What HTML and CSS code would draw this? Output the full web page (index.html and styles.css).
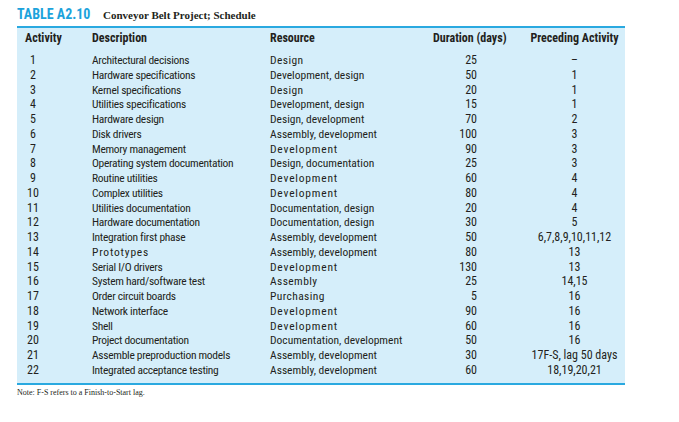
FILE: index.html
```html
<!DOCTYPE html>
<html>
<head>
<meta charset="utf-8">
<link rel="stylesheet" href="styles.css">
</head>
<body>
<div class="page">
  <div class="caption"><span class="label">TABLE A2.10</span><span class="title">Conveyor Belt Project; Schedule</span></div>
  <div class="box">
    <table class="sched">
      <colgroup><col class="c1"><col class="c2"><col class="c3"><col class="c4"><col class="c5"></colgroup>
      <thead>
        <tr><th class="act">Activity</th><th class="desc">Description</th><th class="res">Resource</th><th class="dur">Duration (days)</th><th class="pre">Preceding Activity</th></tr>
      </thead>
      <tbody>
        <tr><td class="act">1</td><td class="desc">Architectural decisions</td><td class="res sp1">Design</td><td class="dur">25</td><td class="pre">–</td></tr>
        <tr><td class="act">2</td><td class="desc">Hardware specifications</td><td class="res">Development, design</td><td class="dur">50</td><td class="pre">1</td></tr>
        <tr><td class="act">3</td><td class="desc">Kernel specifications</td><td class="res sp1">Design</td><td class="dur">20</td><td class="pre">1</td></tr>
        <tr><td class="act">4</td><td class="desc">Utilities specifications</td><td class="res">Development, design</td><td class="dur">15</td><td class="pre">1</td></tr>
        <tr><td class="act">5</td><td class="desc">Hardware design</td><td class="res">Design, development</td><td class="dur">70</td><td class="pre">2</td></tr>
        <tr><td class="act">6</td><td class="desc">Disk drivers</td><td class="res">Assembly, development</td><td class="dur">100</td><td class="pre">3</td></tr>
        <tr><td class="act">7</td><td class="desc">Memory management</td><td class="res sp2">Development</td><td class="dur">90</td><td class="pre">3</td></tr>
        <tr><td class="act">8</td><td class="desc">Operating system documentation</td><td class="res">Design, documentation</td><td class="dur">25</td><td class="pre">3</td></tr>
        <tr><td class="act">9</td><td class="desc">Routine utilities</td><td class="res sp2">Development</td><td class="dur">60</td><td class="pre">4</td></tr>
        <tr><td class="act">10</td><td class="desc">Complex utilities</td><td class="res sp2">Development</td><td class="dur">80</td><td class="pre">4</td></tr>
        <tr><td class="act">11</td><td class="desc">Utilities documentation</td><td class="res">Documentation, design</td><td class="dur">20</td><td class="pre">4</td></tr>
        <tr><td class="act">12</td><td class="desc">Hardware documentation</td><td class="res">Documentation, design</td><td class="dur">30</td><td class="pre">5</td></tr>
        <tr><td class="act">13</td><td class="desc">Integration first phase</td><td class="res">Assembly, development</td><td class="dur">50</td><td class="pre">6,7,8,9,10,11,12</td></tr>
        <tr><td class="act">14</td><td class="desc sp2">Prototypes</td><td class="res">Assembly, development</td><td class="dur">80</td><td class="pre">13</td></tr>
        <tr><td class="act">15</td><td class="desc">Serial I/O drivers</td><td class="res sp2">Development</td><td class="dur">130</td><td class="pre">13</td></tr>
        <tr><td class="act">16</td><td class="desc">System hard/software test</td><td class="res sp1">Assembly</td><td class="dur">25</td><td class="pre">14,15</td></tr>
        <tr><td class="act">17</td><td class="desc">Order circuit boards</td><td class="res sp1">Purchasing</td><td class="dur">5</td><td class="pre">16</td></tr>
        <tr><td class="act">18</td><td class="desc">Network interface</td><td class="res sp2">Development</td><td class="dur">90</td><td class="pre">16</td></tr>
        <tr><td class="act">19</td><td class="desc">Shell</td><td class="res sp2">Development</td><td class="dur">60</td><td class="pre">16</td></tr>
        <tr><td class="act">20</td><td class="desc">Project documentation</td><td class="res">Documentation, development</td><td class="dur">50</td><td class="pre">16</td></tr>
        <tr><td class="act">21</td><td class="desc">Assemble preproduction models</td><td class="res">Assembly, development</td><td class="dur">30</td><td class="pre">17F-S, lag 50 days</td></tr>
        <tr><td class="act">22</td><td class="desc">Integrated acceptance testing</td><td class="res">Assembly, development</td><td class="dur">60</td><td class="pre">18,19,20,21</td></tr>
      </tbody>
    </table>
  </div>
  <p class="note">Note: F-S refers to a Finish-to-Start lag.</p>
</div>
</body>
</html>
```

FILE: styles.css
```css
html, body {
  margin: 0;
  padding: 0;
  background: #ffffff;
}

.page {
  padding: 8px 0 0 17px;
  width: 608px;
}

.caption {
  display: flex;
  align-items: baseline;
  height: 18px;
  line-height: 12px;
}

.label {
  font-family: "Roboto Condensed", "Liberation Sans", Arial, sans-serif;
  font-weight: bold;
  font-size: 14px;
  color: #1ca3dc;
  width: 86px;
}

.title {
  font-family: "Liberation Serif", "Times New Roman", serif;
  font-weight: bold;
  font-size: 11px;
  color: #231f20;
}

.box {
  background: #d5eefa;
  border-top: 2px solid #2aa9e0;
  border-bottom: 2px solid #2aa9e0;
  padding-bottom: 5px;
}

.sched {
  width: 608px;
  border-collapse: collapse;
  table-layout: fixed;
  font-family: "Roboto Condensed", "Liberation Sans", Arial, sans-serif;
  font-size: 12px;
  color: #231f20;
}

.c1 { width: 32px; }
.c2 { width: 221px; }
.c3 { width: 150px; }
.c4 { width: 104px; }
.c5 { width: 101px; }

.sched th {
  font-weight: bold;
  height: 22.6px;
  line-height: 20px;
  padding: 0 0 2.6px 0;
  vertical-align: top;
  white-space: nowrap;
}

.sched td {
  height: 14.75px;
  line-height: 14.75px;
  padding: 0;
  white-space: nowrap;
  font-size: 11.5px;
}

.sched td.act,
.sched td.dur,
.sched td.pre {
  font-size: 12px;
}

.act { text-align: center; }
th.act { text-align: left; padding-left: 8px !important; }
.desc { text-align: left; padding-left: 43px !important; }
td.desc { letter-spacing: -0.3px; }
.res { text-align: left; }
th.dur { text-align: left; padding-left: 13px !important; }
td.dur { text-align: right; padding-right: 47px !important; }
.pre { text-align: center; }

.sched .sp1 { letter-spacing: 0.4px; }
.sched .sp2 { letter-spacing: 0.8px; }

.note {
  margin: 3px 0 0 0;
  font-family: "Liberation Serif", "Times New Roman", serif;
  font-size: 8px;
  line-height: 10px;
  color: #231f20;
}
```
